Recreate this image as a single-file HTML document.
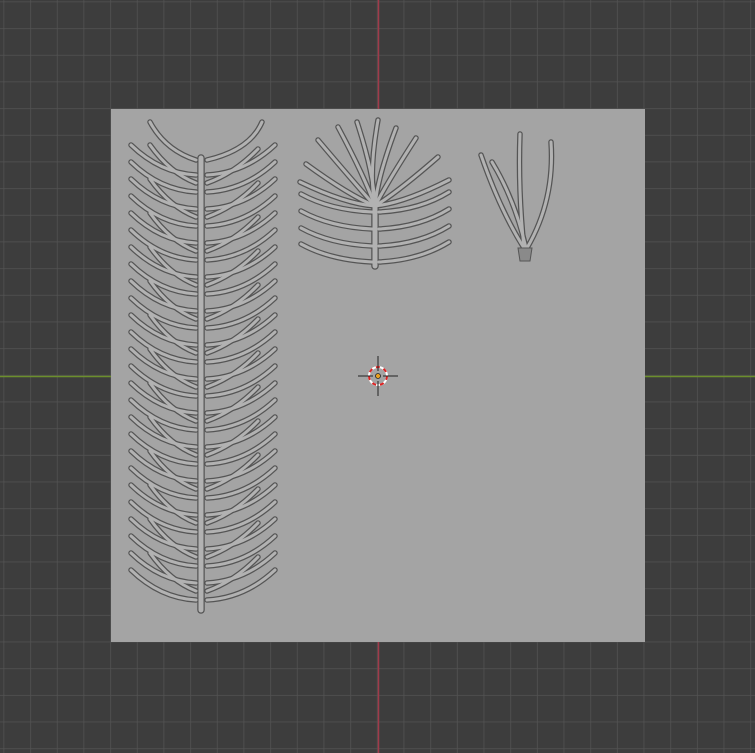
<!DOCTYPE html>
<html><head><meta charset="utf-8"><style>
html,body{margin:0;padding:0;width:755px;height:753px;overflow:hidden;background:#3d3d3d}
svg{display:block}
</style></head><body>
<svg id="s" width="755" height="753" xmlns="http://www.w3.org/2000/svg">
<defs>
<pattern id="g" x="3.5" y="1.5" width="26.67" height="26.67" patternUnits="userSpaceOnUse">
<path d="M0 0H26.67M0 0V26.67" stroke="#535353" stroke-width="1.5" fill="none"/>
</pattern>
</defs>
<rect width="755" height="753" fill="#3d3d3d"/>
<rect width="755" height="753" fill="url(#g)"/>
<line x1="0" y1="376.5" x2="755" y2="376.5" stroke="#6c8f2c" stroke-width="1.5"/>
<line x1="378.5" y1="0" x2="378.5" y2="753" stroke="#a13a4a" stroke-width="1.5"/>
<rect x="111" y="109" width="534" height="533" fill="#a4a4a4"/>
<g id="n" fill="none" stroke-linecap="round"></g>
<g transform="translate(378,376)">
<circle r="9" fill="none" stroke="#fff" stroke-width="2"/>
<circle r="9" fill="none" stroke="#d22" stroke-width="2" stroke-dasharray="4 4"/>
<line x1="-20" y1="0" x2="-5" y2="0" stroke="#222" stroke-width="1"/>
<line x1="5" y1="0" x2="20" y2="0" stroke="#222" stroke-width="1"/>
<line x1="0" y1="-20" x2="0" y2="-5" stroke="#222" stroke-width="1"/>
<line x1="0" y1="5" x2="0" y2="20" stroke="#222" stroke-width="1"/>
<circle r="2.5" fill="#e8a020" stroke="#222" stroke-width="0.8"/>
</g>
</svg>
<script>
var d=[];
function P(p,w){d.push([p,w||4]);}
// main branch
for(var i=0;i<26;i++){var y=175+i*17;
 P("M196 "+y+" Q160 "+(y-2)+" 131 "+(y-30));
 P("M207 "+y+" Q245 "+(y-2)+" 275 "+(y-30));
 if(i%2==0){P("M196 "+(y+8)+" Q170 "+(y-2)+" 150 "+(y-30));P("M207 "+(y+8)+" Q235 "+(y-2)+" 258 "+(y-26));}
}
P("M196 160 Q165 150 150 122");P("M207 160 Q250 150 262 122");
P("M201 158 L201 610",6);
// fan
var tips=[[318,140],[338,127],[357,122],[378,120],[396,128],[416,138],[438,157],[449,180],[306,164],[300,182]];
tips.forEach(function(t){P("M375 206 Q"+((375+t[0])/2+(t[0]<375?8:-8))+" "+((206+t[1])/2+10)+" "+t[0]+" "+t[1]);});
[212,229,246,262].forEach(function(y){P("M372 "+y+" Q330 "+(y-2)+" 301 "+(y-18));P("M379 "+y+" Q420 "+(y-2)+" 449 "+(y-20));});
P("M375 203 L375 266",6);
// small cluster
P("M524 248 Q500 210 481 155");P("M526 248 Q515 200 492 162");P("M524 248 Q518 190 520 134");P("M527 248 Q555 200 551 142");
var g=document.getElementById('n'),s='';
d.forEach(function(e){s+='<path d="'+e[0]+'" stroke="#555" stroke-width="'+(e[1]+1.5)+'"/>';});
d.forEach(function(e){s+='<path d="'+e[0]+'" stroke="#b2b2b2" stroke-width="'+(e[1]-1)+'"/>';});
s+='<path d="M518 248 L532 248 L530 261 L520 261 Z" fill="#8a8a8a" stroke="#555"/>';
g.innerHTML=s;
</script>
</body></html>
